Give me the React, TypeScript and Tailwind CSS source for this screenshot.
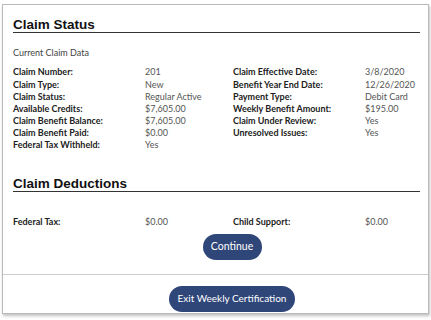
import React from 'react';

const statusLeft: [string, string][] = [
  ['Claim Number:', '201'],
  ['Claim Type:', 'New'],
  ['Claim Status:', 'Regular Active'],
  ['Available Credits:', '$7,605.00'],
  ['Claim Benefit Balance:', '$7,605.00'],
  ['Claim Benefit Paid:', '$0.00'],
  ['Federal Tax Withheld:', 'Yes'],
];

const statusRight: [string, string][] = [
  ['Claim Effective Date:', '3/8/2020'],
  ['Benefit Year End Date:', '12/26/2020'],
  ['Payment Type:', 'Debit Card'],
  ['Weekly Benefit Amount:', '$195.00'],
  ['Claim Under Review:', 'Yes'],
  ['Unresolved Issues:', 'Yes'],
];

const Row = ({ label, value }: { label: string; value: string }) => (
  <div className="flex h-[12.2px] items-center">
    <span className="w-[132px] font-bold text-[#222]">{label}</span>
    <span className="text-[#555]">{value}</span>
  </div>
);

const SectionTitle = ({ children }: { children: React.ReactNode }) => (
  <h2
    className="mr-[8px] border-b border-[#333] text-[13.5px] font-bold leading-[14px] text-[#111]"
    style={{ fontFamily: '"Liberation Sans", Arial, sans-serif' }}
  >
    {children}
  </h2>
);

const App: React.FC = () => {
  return (
    <div className="h-[320px] w-[431px] bg-white pl-[2px] pt-[4px]" style={{ fontFamily: 'Lato, "Open Sans", sans-serif' }}>
      <div className="h-[310px] w-[427px] border border-[#bbb] bg-white shadow-[1px_2px_3px_rgba(0,0,0,0.25)]">
        <div className="pl-[10px] pt-[13px]">
          <SectionTitle>Claim Status</SectionTitle>
          <div className="mt-[14px] text-[9px] leading-[12px] text-[#444]">Current Claim Data</div>
          <div className="mt-[7px] flex text-[9px]">
            <div className="w-[220px]">
              {statusLeft.map(([l, v]) => (
                <Row key={l} label={l} value={v} />
              ))}
            </div>
            <div>
              {statusRight.map(([l, v]) => (
                <Row key={l} label={l} value={v} />
              ))}
            </div>
          </div>
          <div className="mt-[26px]">
            <SectionTitle>Claim Deductions</SectionTitle>
          </div>
          <div className="mt-[23px] flex text-[9px]">
            <div className="w-[220px]">
              <Row label="Federal Tax:" value="$0.00" />
            </div>
            <Row label="Child Support:" value="$0.00" />
          </div>
        </div>
        <div className="mt-[6px] flex justify-center pl-[33px]">
          <button className="h-[26px] w-[59px] rounded-full bg-[#2f4679] text-[10.5px] text-white">Continue</button>
        </div>
        <div className="mt-[14px] border-t border-[#ccc]" />
        <div className="mt-[11px] flex justify-center pl-[33px]">
          <button className="h-[26px] w-[126px] rounded-full bg-[#2f4679] text-[10px] text-white">Exit Weekly Certification</button>
        </div>
      </div>
    </div>
  );
};

export default App;
